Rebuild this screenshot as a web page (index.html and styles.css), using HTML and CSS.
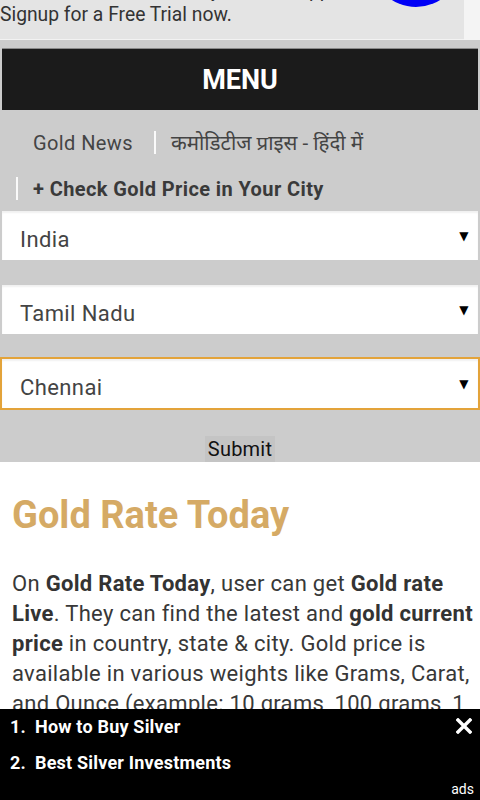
FILE: index.html
```html
<!DOCTYPE html>
<html lang="en">
<head>
<meta charset="utf-8">
<title>Gold Rate Today</title>
<link rel="stylesheet" href="styles.css">
</head>
<body>
<div class="top-ad">
  <div class="top-ad-box">
    <div class="top-ad-text">
      <p class="ad-line">Trade commodities easily with our app</p>
      <p class="ad-line">Signup for a Free Trial now.</p>
    </div>
    <div class="ad-logo"></div>
  </div>
  <div class="top-ad-side"></div>
</div>
<div class="nav-wrap">
  <div class="menu-bar">MENU</div>
  <ul class="menu-list">
    <li class="menu-item first"><a>Gold News</a></li>
    <li class="menu-item"><a class="hindi">कमोडिटीज प्राइस - हिंदी में</a></li>
    <li class="menu-item"><a class="strong">+ Check Gold Price in Your City</a></li>
  </ul>
  <form class="city-form">
    <div class="field"><span>India</span><span class="arrow">▼</span></div>
    <div class="field"><span>Tamil Nadu</span><span class="arrow">▼</span></div>
    <div class="field focused"><span>Chennai</span><span class="arrow">▼</span></div>
    <div class="submit-row"><button type="button" class="submit">Submit</button></div>
  </form>
</div>
<main class="content">
  <h1 class="title">Gold Rate Today</h1>
  <p class="intro">On <b>Gold Rate Today</b>, user can get <b>Gold rate Live</b>. They can find the latest and <b>gold current price</b> in country, state &amp; city. Gold price is available in various weights like Grams, Carat, and Ounce (example: 10 grams, 100 grams, 1 kilogram) for the convenience of users.</p>
</main>
<div class="bottom-ad">
  <ol class="ad-links">
    <li><span class="num">1.</span>How to Buy Silver</li>
    <li><span class="num">2.</span>Best Silver Investments</li>
  </ol>
  <svg class="close" width="16" height="16" viewBox="0 0 16 16" aria-label="close">
    <path d="M2 2 L14 14 M14 2 L2 14" stroke="#fff" stroke-width="3.4" stroke-linecap="square" fill="none"/>
  </svg>
  <span class="ads-label">ads</span>
</div>
</body>
</html>
```
FILE: styles.css
```css
* { box-sizing: border-box; }
html, body { margin: 0; padding: 0; }
body {
  width: 480px;
  font-family: Roboto, "Noto Sans", "Noto Sans Devanagari", sans-serif;
  background: #fff;
  color: #333;
  overflow: hidden;
}
.top-ad {
  display: flex;
  height: 40px;
  background: #f2f2f2;
}
.top-ad-box {
  position: relative;
  width: 464px;
  height: 39px;
  background: #e4e4e4;
  overflow: hidden;
}
.top-ad-text {
  margin-top: -21px;
}
.ad-line {
  margin: 0;
  font-size: 19.3px;
  line-height: 24px;
  color: #333;
  white-space: nowrap;
  font-weight: 400;
}
.ad-logo {
  position: absolute;
  left: 371px;
  top: -83px;
  width: 90px;
  height: 90px;
  border-radius: 50%;
  background: #0000f6;
}
.top-ad-side { flex: 1; background: #f4f4f4; }

.nav-wrap {
  background: #cccccc;
  padding-top: 8px;
}
.menu-bar {
  margin: 0 2px;
  border-top: 1px solid #8a8a8a;
  height: 62px;
  background: #1b1b1b;
  color: #fff;
  font-weight: 700;
  font-size: 27px;
  display: flex;
  align-items: center;
  justify-content: center;
}
.menu-list {
  list-style: none;
  margin: 0;
  padding: 9px 0 0 16px;
  display: flex;
  flex-wrap: wrap;
}
.menu-item {
  margin: 12px 0 11px;
  line-height: 22px;
}
.menu-item a {
  display: block;
  border-left: 2px solid #fafafa;
  padding: 1px 21px 0 15px;
  font-size: 20px;
  letter-spacing: 0.4px;
  color: #444;
}
.menu-item a.hindi { letter-spacing: 0; font-size: 20.5px; }
.menu-item.first a { border-left-color: transparent; }
.menu-item a.strong { font-weight: 700; color: #3a3a3a; }

.city-form {
  display: flex;
  flex-direction: column;
  gap: 25px;
  padding: 0 2px;
}
.field {
  height: 49px;
  background: #fff;
  box-shadow: inset 0 2px 2px rgba(0,0,0,0.06);
  display: flex;
  align-items: center;
  justify-content: space-between;
  padding: 0 9px 0 18px;
  font-size: 22px;
  letter-spacing: 0.4px;
  color: #444;
}
.field span:first-child { padding-top: 8px; }
.field.focused {
  outline: 2px solid #e3a33a;
}
.arrow {
  font-size: 12px;
  color: #000;
  align-self: flex-start;
  margin-top: 18px;
  font-family: "DejaVu Sans", sans-serif;
}
.submit-row {
  display: flex;
  justify-content: center;
  margin-top: 3px;
}
.submit {
  border: 0;
  margin: 0;
  background: #c4c4c4;
  font-family: Roboto, sans-serif;
  font-size: 20px;
  letter-spacing: 0.2px;
  color: #111;
  height: 26px;
  padding: 0 3px;
  line-height: 26px;
}

.content {
  padding: 0 6px 0 12px;
}
.title {
  margin: 0;
  padding-top: 31px;
  font-size: 38px;
  line-height: 44px;
  font-weight: 700;
  color: #d5aa65;
}
.intro {
  margin: 32px 0 0;
  font-size: 22px;
  line-height: 30px;
  letter-spacing: 0.3px;
  color: #383838;
}
.intro b { color: #333; }

.bottom-ad {
  position: fixed;
  left: 0;
  right: 0;
  bottom: 0;
  height: 91px;
  background: #000;
  color: #fff;
}
.ad-links {
  list-style: none;
  margin: 0;
  padding: 0 0 0 10px;
}
.ad-links li {
  font-weight: 700;
  font-size: 18px;
  line-height: 36px;
  letter-spacing: 0.2px;
}
.num { display: inline-block; width: 25px; }
.close {
  position: absolute;
  right: 8px;
  top: 9px;
}
.ads-label {
  position: absolute;
  right: 6px;
  bottom: 3px;
  font-size: 14px;
}
```
